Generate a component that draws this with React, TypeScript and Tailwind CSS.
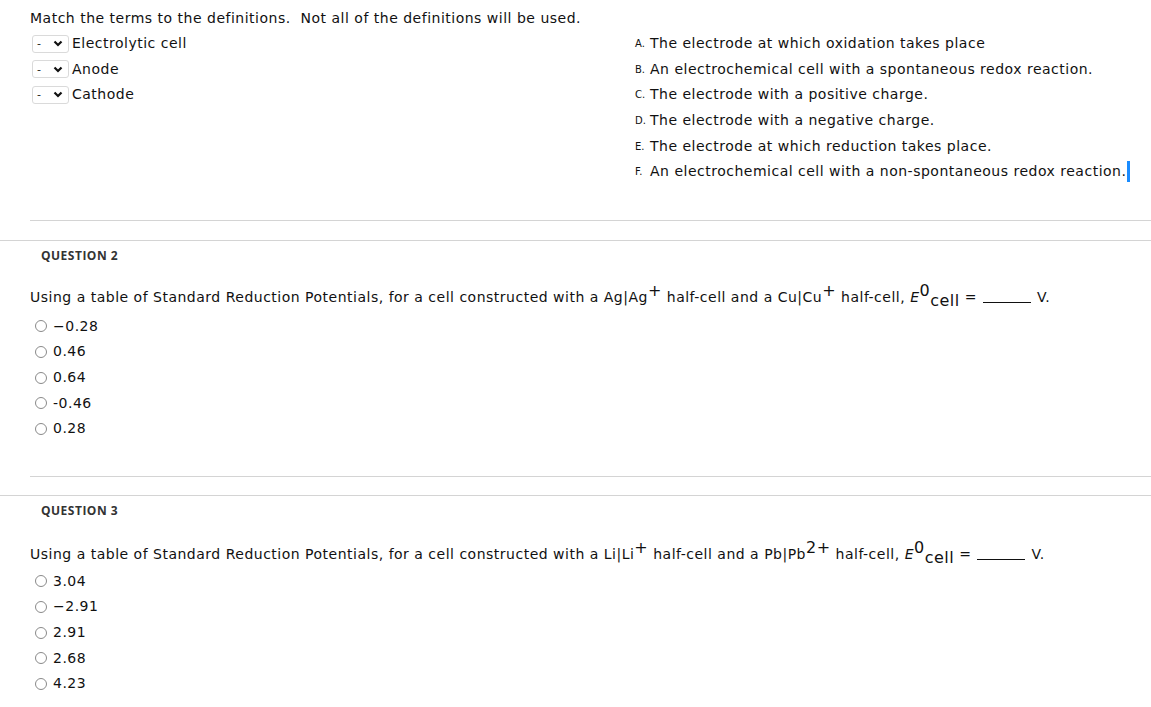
import React from 'react';

const terms = ['Electrolytic cell', 'Anode', 'Cathode'];

const defs = [
  ['A.', 'The electrode at which oxidation takes place'],
  ['B.', 'An electrochemical cell with a spontaneous redox reaction.'],
  ['C.', 'The electrode with a positive charge.'],
  ['D.', 'The electrode with a negative charge.'],
  ['E.', 'The electrode at which reduction takes place.'],
  ['F.', 'An electrochemical cell with a non-spontaneous redox reaction.'],
];

const SelectBox: React.FC = () => (
  <span className="inline-flex items-center justify-between w-[37px] h-[18px] border border-[#dadada] rounded-[3px] px-[4px] bg-white">
    <span className="text-[11px] leading-none text-[#222]">-</span>
    <svg width="10" height="7" viewBox="0 0 10 7" className="mr-[1px]">
      <path d="M1.5 1.5l3.5 3.5 3.5-3.5" fill="none" stroke="#111" strokeWidth="2.2" />
    </svg>
  </span>
);

const Radio: React.FC<{ label: string }> = ({ label }) => (
  <div className="flex items-center h-[25.6px]">
    <span className="w-[12px] h-[12px] rounded-full border border-[#8a8a8a] bg-white ml-[5px] mr-[6px]" />
    <span>{label}</span>
  </div>
);

const Divider: React.FC<{ gap: string }> = ({ gap }) => (
  <>
    <div className="ml-[30px] h-px bg-[#d4d4d4]" />
    <div className={`${gap} h-px bg-[#d4d4d4]`} />
  </>
);

const Question: React.FC<{ num: number; children: React.ReactNode; options: string[]; textGap: string; optGap: string }> = ({
  num,
  children,
  options,
  textGap,
  optGap,
}) => (
  <div className="pl-[30px]">
    <div className="pl-[11px] pt-[6px] text-[12px] font-bold tracking-[0.5px] text-[#333] font-['Open_Sans',sans-serif]">QUESTION {num}</div>
    <div className={`${textGap} h-[26px] flex items-center`}>{children}</div>
    <div className={optGap}>
      {options.map((o) => (
        <Radio key={o} label={o} />
      ))}
    </div>
  </div>
);

const Sup: React.FC<{ children: React.ReactNode }> = ({ children }) => (
  <span className="text-[16px] leading-none relative -top-[7px]">{children}</span>
);

const Ecell: React.FC = () => (
  <>
    <i className="ml-[5px]">E</i>
    <Sup>0</Sup>
    <span className="text-[16px] leading-none relative top-[3px]">cell</span>
    <span className="ml-[5px]">=</span>
    <span className="ml-[6px] inline-block w-[48px] border-b border-[#111] h-[11px]" />
    <span className="ml-[6px]">V.</span>
  </>
);

export default function App() {
  return (
    <div className="min-h-screen bg-white text-[#111] text-[14px] tracking-[0.5px] font-['DejaVu_Sans',Verdana,sans-serif]">
      <div className="pl-[30px] pt-[8px]">
        <div className="h-[20px] flex items-center">Match the terms to the definitions.&nbsp; Not all of the definitions will be used.</div>
        <div className="flex mt-[3px]">
          <div className="w-[605px] pl-[2px]">
            {terms.map((t) => (
              <div key={t} className="flex items-center h-[25.6px] gap-[3px]">
                <SelectBox />
                <span>{t}</span>
              </div>
            ))}
          </div>
          <div>
            {defs.map(([l, d], i) => (
              <div key={l} className="flex items-center h-[25.6px]">
                <span className="text-[10px] tracking-normal w-[15px]">{l}</span>
                <span>{d}</span>
                {i === defs.length - 1 && <span className="w-[3px] h-[21px] bg-[#1a8cff] ml-[1px]" />}
              </div>
            ))}
          </div>
        </div>
      </div>
      <div className="mt-[35px]">
        <Divider gap="mt-[19px]" />
      </div>
      <Question num={2} options={['−0.28', '0.46', '0.64', '-0.46', '0.28']} textGap="mt-[20px]" optGap="mt-[3px]">
        <span>Using a table of Standard Reduction Potentials, for a cell constructed with a Ag|Ag</span>
        <Sup>+</Sup>
        <span>&nbsp;half-cell and a Cu|Cu</span>
        <Sup>+</Sup>
        <span>&nbsp;half-cell,</span>
        <Ecell />
      </Question>
      <div className="mt-[34px]">
        <Divider gap="mt-[18px]" />
      </div>
      <Question num={3} options={['3.04', '−2.91', '2.91', '2.68', '4.23']} textGap="mt-[22px]" optGap="mt-[1px]">
        <span>Using a table of Standard Reduction Potentials, for a cell constructed with a Li|Li</span>
        <Sup>+</Sup>
        <span>&nbsp;half-cell and a Pb|Pb</span>
        <Sup>2+</Sup>
        <span>&nbsp;half-cell,</span>
        <Ecell />
      </Question>
    </div>
  );
}
